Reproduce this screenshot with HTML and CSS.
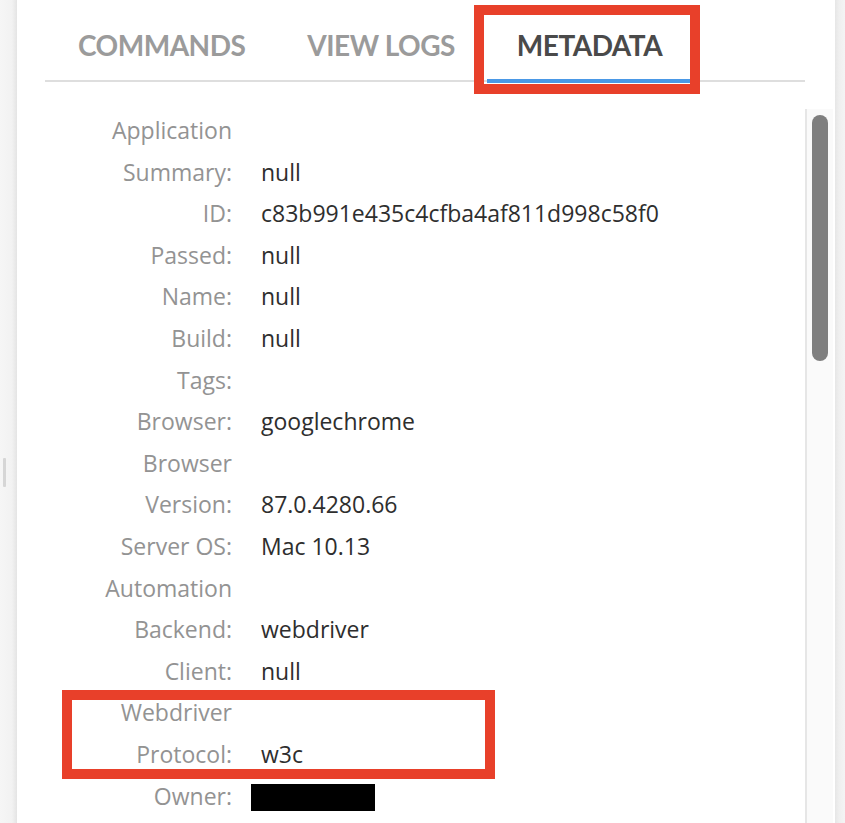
FILE: index.html
```html
<!DOCTYPE html>
<html>
<head>
<meta charset="utf-8">
<link rel="stylesheet" href="styles.css">
</head>
<body>
<div class="page">
  <div class="edge-left"><div class="handle"></div></div>
  <div class="panel">
    <div class="tabs">
      <div class="tab">COMMANDS</div>
      <div class="tab">VIEW LOGS</div>
      <div class="tab active">METADATA</div>
    </div>
    <div class="body-row">
      <dl class="meta">
        <dt>Application Summary:</dt><dd>null</dd>
        <dt>ID:</dt><dd>c83b991e435c4cfba4af811d998c58f0</dd>
        <dt>Passed:</dt><dd>null</dd>
        <dt>Name:</dt><dd>null</dd>
        <dt>Build:</dt><dd>null</dd>
        <dt>Tags:</dt><dd></dd>
        <dt>Browser:</dt><dd>googlechrome</dd>
        <dt>Browser Version:</dt><dd>87.0.4280.66</dd>
        <dt>Server OS:</dt><dd>Mac 10.13</dd>
        <dt>Automation Backend:</dt><dd>webdriver</dd>
        <dt>Client:</dt><dd>null</dd>
        <dt>Webdriver Protocol:</dt><dd>w3c</dd>
        <dt>Owner:</dt><dd><span class="redacted"></span></dd>
      </dl>
      <div class="scrollbar"><div class="thumb"></div></div>
    </div>
  </div>
  <div class="edge-right"></div>
  <div class="mark mark-tab"></div>
  <div class="mark mark-row"></div>
</div>
</body>
</html>
```

FILE: styles.css
```css
html, body {
  margin: 0;
  padding: 0;
  background: #fff;
}
.page {
  position: relative;
  display: flex;
  width: 845px;
  height: 823px;
  overflow: hidden;
  font-family: "Open Sans", "Lato", sans-serif;
}
.edge-left {
  width: 17px;
  flex: none;
  background: linear-gradient(to right, #f6f6f6 0%, #f2f2f2 70%, #e4e4e4 100%);
  display: flex;
  flex-direction: column;
}
.handle {
  width: 3px;
  height: 29px;
  margin: 458px 0 0 3px;
  background: #d6d6d6;
  border-radius: 1px;
}
.edge-right {
  width: 10px;
  flex: none;
  background: linear-gradient(to right, #e6e6e6 0%, #efefef 40%, #f4f4f4 100%);
}
.panel {
  flex: 1;
  background: #fff;
  padding-left: 28px;
  display: flex;
  flex-direction: column;
  min-width: 0;
}
.tabs {
  display: flex;
  margin-right: 30px;
  padding-left: 2px;
  border-bottom: 2px solid #dedede;
}
.tab {
  position: relative;
  padding: 28px 31px 18px;
  font-family: "Lato", "Open Sans", sans-serif;
  font-size: 28px;
  line-height: 34px;
  font-weight: 700;
  letter-spacing: -0.5px;
  color: #9b9b9b;
  white-space: nowrap;
}
.tab.active {
  color: #4a4a4a;
}
.tab.active::after {
  content: "";
  position: absolute;
  left: 1px;
  right: 0;
  bottom: -3px;
  height: 4px;
  background: #4a98e6;
}
.body-row {
  flex: 1;
  display: flex;
  margin-top: 27px;
  margin-right: 2px;
  min-height: 0;
}
.meta {
  flex: 1;
  margin: 0;
  padding: 1px 0 0 55px;
  display: grid;
  grid-template-columns: 132px 1fr;
  column-gap: 29px;
  align-items: end;
  align-content: start;
  font-size: 23px;
  line-height: 41.6px;
}
.meta dt {
  text-align: right;
  color: #939393;
}
.meta dd {
  margin: 0;
  color: #2e2e2e;
  white-space: nowrap;
}
.redacted {
  display: inline-block;
  width: 124px;
  height: 27px;
  margin-left: -10px;
  background: #000;
  vertical-align: -6px;
}
.scrollbar {
  width: 26px;
  flex: none;
  background: #fafafa;
  border-left: 2px solid #e6e6e6;
  display: flex;
  justify-content: center;
  align-items: flex-start;
}
.thumb {
  width: 16px;
  height: 246px;
  margin-top: 6px;
  border-radius: 8px;
  background: #7f7f7f;
}
.mark {
  position: absolute;
  border: 10px solid #e8402a;
  box-sizing: border-box;
}
.mark-tab {
  left: 474px;
  top: 5px;
  width: 226px;
  height: 89px;
}
.mark-row {
  left: 62px;
  top: 690px;
  width: 433px;
  height: 89px;
}
```
